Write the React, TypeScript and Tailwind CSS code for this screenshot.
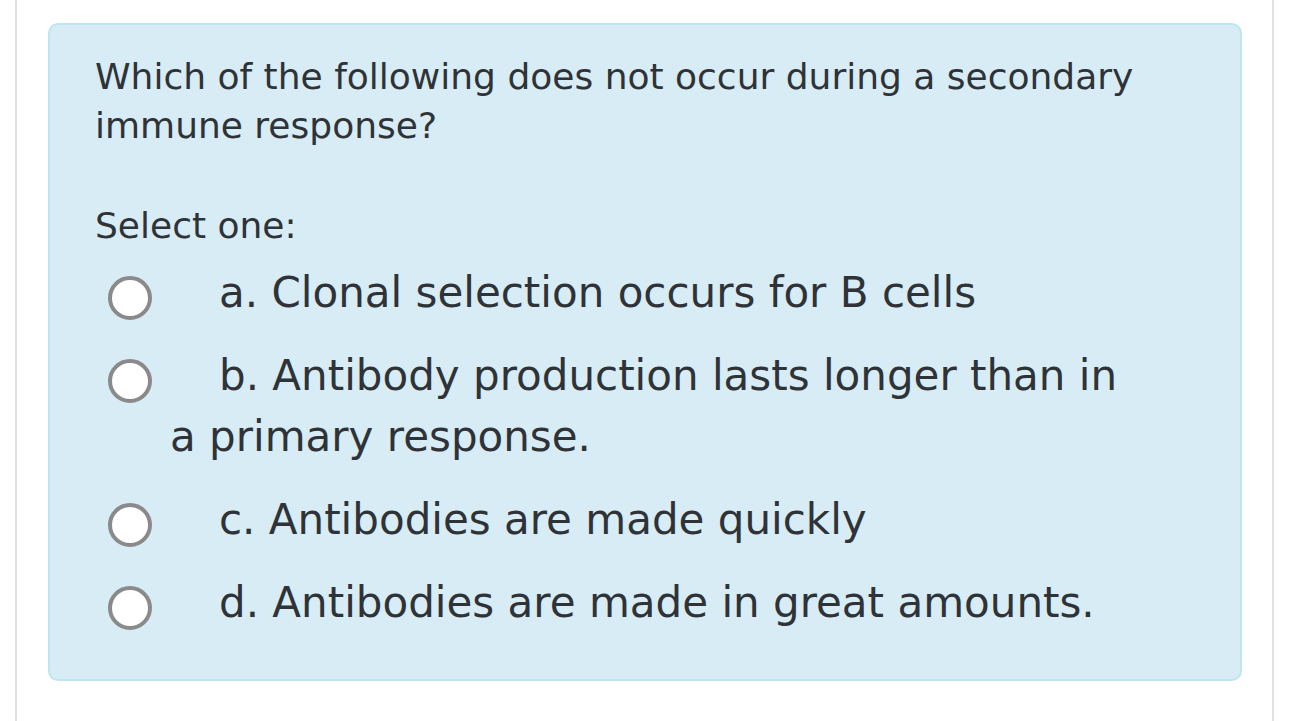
export default function App() {
  const opts = [
    "a. Clonal selection occurs for B cells",
    "b. Antibody production lasts longer than in a primary response.",
    "c. Antibodies are made quickly",
    "d. Antibodies are made in great amounts.",
  ];
  return (
    <div className="min-h-[721px] bg-white" style={{ fontFamily: '"DejaVu Sans", Verdana, sans-serif' }}>
      <div className="ml-[15px] w-[1259px] min-h-[721px] border-x-2 border-[#e2e2e2] pt-[23px]">
        <div className="ml-[31px] w-[1194px] h-[658px] rounded-[10px] border-2 border-[#bee6ef] bg-[#d7ecf5] px-[45px] pt-[27px] text-[#2f3337]">
          <div className="text-[36px] leading-[49px] pr-[20px]">
            Which of the following does not occur during a secondary immune response?
          </div>
          <div className="mt-[51px] text-[36px] leading-[49px]">Select one:</div>
          <div className="mt-[12px] text-[42px] leading-[61px] w-[1050px]">
            {opts.map((o) => (
              <div key={o} className="pl-[75px] mb-[22px]">
                <span className="inline-block align-middle -ml-[62px] mr-[67px] w-[44px] h-[44px] rounded-full border-[4px] border-[#8a8a8a] bg-white relative top-[2px]"></span>
                {o}
              </div>
            ))}
          </div>
        </div>
      </div>
    </div>
  );
}
